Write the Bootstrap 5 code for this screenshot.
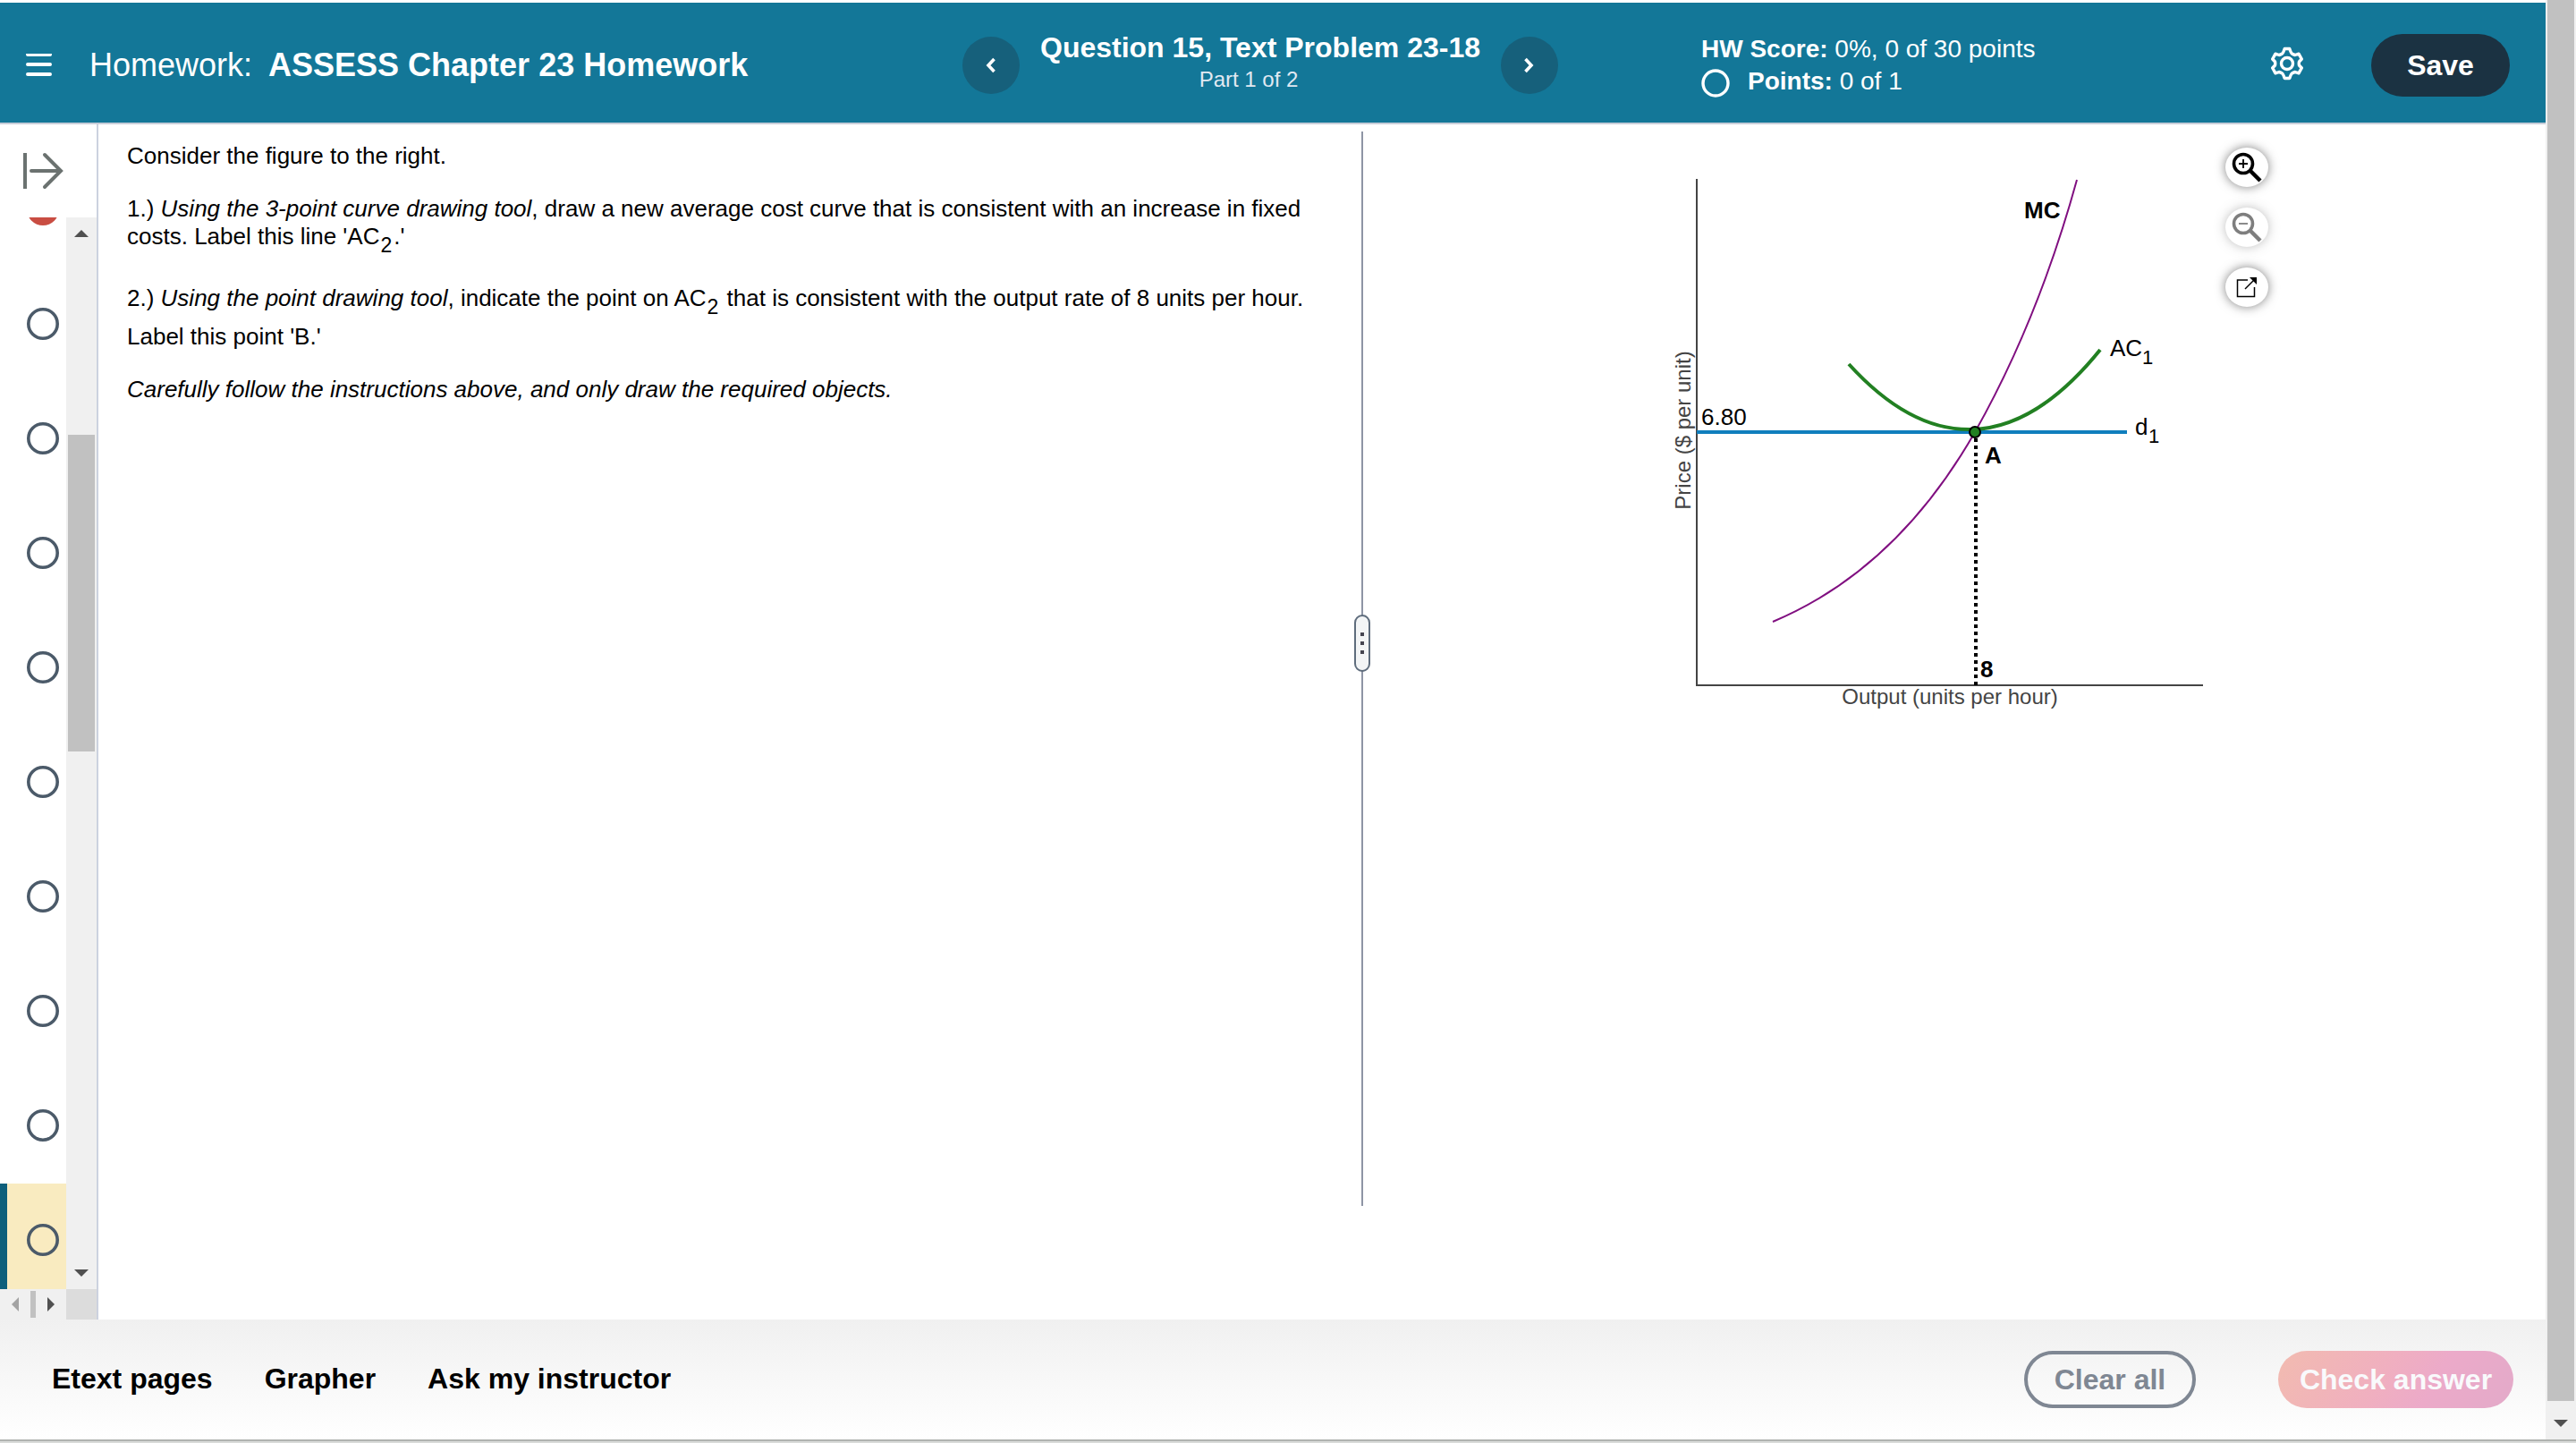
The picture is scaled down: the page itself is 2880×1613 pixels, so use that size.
<!DOCTYPE html>
<html lang="en">
<head>
<meta charset="utf-8">
<meta name="viewport" content="width=device-width, initial-scale=1">
<title>ASSESS Chapter 23 Homework</title>
<link href="https://cdn.jsdelivr.net/npm/bootstrap@5.3.0/dist/css/bootstrap.min.css" rel="stylesheet">
<style>
  body { font-family: "Liberation Sans", Arial, sans-serif; font-size: 26px; line-height: 31px; color: #000; background: #fff; }
  button { border: 0; padding: 0; background: none; color: inherit; }
  .page-shell { border-bottom: 2px solid #d9dbd9; }
  .page-frame { border-bottom: 2px solid #b0b3b0; }
  .app-bar { height: 136px; margin-top: 3px; padding-top: 6px; background: #137798; color: #fff; border-bottom: 2px solid #c7cdd8; }
  .bar-side { flex: 1 1 0; min-width: 0; }
  .bar-title { margin-left: 29px; gap: 42px; font-size: 36px; line-height: 40px; }
  .bar-title strong { margin-left: 18px; }
  .bar-center { padding-right: 28px; gap: 20px; }
  .round-nav { width: 64px; height: 64px; border-radius: 50%; background: #16607b; }
  .question-title { font-size: 32px; line-height: 36px; margin: 0; font-weight: 700; }
  .question-part { font-size: 24px; line-height: 36px; color: #e1e9f2; padding-right: 26px; }
  .question-block { padding-bottom: 4px; width: 498px; }
  .score-block { margin-left: 132px; font-size: 28px; line-height: 36px; }
  .score-ring { margin-right: 20px; }
  .save-btn { width: 155px; height: 70px; border-radius: 35px; background: #1b3242; font-size: 32px; font-weight: 700; margin-left: 75px; margin-right: 40px; }

  .side-rail { width: 110px; border-right: 2px solid #ccd2df; }
  .rail-toggle { height: 104px; padding-left: 25px; }
  .question-list { margin-top: -72px; }
  .question-link { height: 128px; padding-left: 30px; padding-bottom: 2px; }
  .question-link.current { border-left: 8px solid #0e5f7b; padding-left: 22px; background: #f9ebc0; }
  .scroll-track { width: 34px; background: #f0f0f0; }
  .rail-track, .page-track { padding-bottom: 14px; }
  .rail-track { padding-top: 14px; }
  .scroll-thumb { width: 30px; background: #c1c1c1; }
  .rail-thumb { margin-top: 221px; height: 354px; }
  .rail-bottom { height: 34px; background: #f0f0f0; }
  .rail-corner { width: 34px; background: #dcdcdc; }
  .tiny-thumb { width: 6px; height: 30px; background: #c1c1c1; }

  .prompt-pane { flex: 1412 1 0; min-width: 0; }
  .prompt-text { padding: 20px 20px 0 32px; }
  .prompt-text p { margin-bottom: 28px; }
  .prompt-text sub { font-size: 23px; line-height: 0; bottom: -9px; margin: 0 2px 0 1px; }
  .prompt-text .first-step { margin-bottom: 32px; }
  .prompt-text .second-step { line-height: 43px; margin-bottom: 22px; }
  .splitter { width: 2px; margin: 8px 0 127px; background: #8e95a5; }
  .split-handle { top: 45%; width: 18px; height: 64px; border: 2px solid #5f6d7d; border-radius: 9px; background: #f3f5f6; gap: 6px; }
  .split-handle i { width: 4px; height: 4px; background: #454550; }
  .figure-pane { flex: 1322 1 0; min-width: 0; padding-top: 26px; gap: 14px; }
  .figure-pane text { font-family: "Liberation Sans", Arial, sans-serif; font-size: 26px; }
  .figure-pane .axis-name { font-size: 24px; fill: #444; }
  .figure-pane .index-digit { font-size: 22px; }
  .tool-stack { gap: 23px; }
  .tool-btn { width: 48px; height: 44px; border-radius: 50%; background: #fff; box-shadow: 0 0 12px rgba(0,0,0,.5); }
  .tool-btn:disabled { opacity: .5; }

  .foot-bar { height: 134px; padding: 0 36px 0 58px; background: linear-gradient(#f0f0f0, #fff); font-size: 32px; line-height: 36px; font-weight: 700; }
  .foot-links { gap: 58px; padding-bottom: 2px; }
  .foot-links a { color: #000; text-decoration: none; }
  .pill { height: 64px; border-radius: 32px; }
  .clear-btn { width: 192px; border: 4px solid #7f8793; color: #7f8793; }
  .check-btn { width: 263px; margin-left: 92px; color: #f9fafc; background: linear-gradient(120deg, #f2bbb0 0%, #f0afc0 45%, #ecaac9 65%, #e3aac9 100%); }
  .page-thumb { height: 1566px; max-height: 99%; }
</style>
<script src="https://cdn.jsdelivr.net/npm/bootstrap@5.3.0/dist/js/bootstrap.bundle.min.js"></script>
</head>
<body>
<div class="page-shell vh-100 overflow-hidden d-flex flex-column">
<div class="page-frame d-flex flex-fill overflow-hidden">
  <div class="d-flex flex-column flex-fill overflow-hidden">

    <header class="app-bar d-flex align-items-center flex-shrink-0">
      <div class="bar-side">
        <div class="bar-title d-flex align-items-center">
          <button type="button" aria-label="Menu" class="d-flex">
            <svg width="29" height="26" viewBox="0 0 29 26" stroke="#fff" stroke-width="4" stroke-linecap="round"><path d="M2 1H27M2 12H27M2 23H27"/></svg>
          </button>
          <div class="text-nowrap">Homework:<strong>ASSESS Chapter 23 Homework</strong></div>
        </div>
      </div>
      <div class="bar-center d-flex align-items-center">
        <button type="button" class="round-nav d-flex align-items-center justify-content-center" aria-label="Previous question">
          <svg width="12" height="18" viewBox="0 0 12 18" fill="none" stroke="#fff" stroke-width="3.600"><path d="M9.500 2L3 9L9.500 16"/></svg>
        </button>
        <div class="question-block text-center text-nowrap">
          <h1 class="question-title">Question 15, Text Problem 23-18</h1>
          <div class="question-part">Part 1 of 2</div>
        </div>
        <button type="button" class="round-nav d-flex align-items-center justify-content-center" aria-label="Next question">
          <svg width="12" height="18" viewBox="0 0 12 18" fill="none" stroke="#fff" stroke-width="3.600"><path d="M1.500 2L8 9L1.500 16"/></svg>
        </button>
      </div>
      <div class="bar-side d-flex align-items-center">
        <div class="score-block text-nowrap">
          <div><strong>HW Score:</strong> 0%, 0 of 30 points</div>
          <div class="d-flex align-items-center">
            <svg class="score-ring" width="32" height="36" viewBox="0 0 32 36"><circle cx="16" cy="20" r="14" fill="none" stroke="#fff" stroke-width="3.400"/></svg>
            <span><strong>Points:</strong> 0 of 1</span>
          </div>
        </div>
        <button type="button" class="ms-auto d-flex pb-1" aria-label="Settings">
          <svg width="38" height="38" viewBox="0 0 38 38" fill="none" stroke="#fff" stroke-width="3.400" stroke-linejoin="round">
            <path d="M16.200 2.500H21.800Q23.500 7.500 24.500 8Q26 9 28 9.500L32 8.200L35.300 14L32.500 17Q32 19 32.500 21L35.300 24L32 29.800L28 28.500Q26 29 24.500 30Q23.500 30.500 21.800 35.500H16.200Q14.500 30.500 13.500 30Q12 29 10 28.500L6 29.800L2.700 24L5.500 21Q6 19 5.500 17L2.700 14L6 8.200L10 9.500Q12 9 13.500 8Q14.500 7.500 16.200 2.500Z"/>
            <circle cx="19" cy="19" r="6.500"/>
          </svg>
        </button>
        <button type="button" class="save-btn">Save</button>
      </div>
    </header>

    <main class="d-flex flex-fill overflow-hidden">
      <nav class="side-rail d-flex flex-column flex-shrink-0" aria-label="Questions">
        <button type="button" class="rail-toggle d-flex align-items-center flex-shrink-0" aria-label="Expand question list">
          <svg width="46" height="42" viewBox="0 0 46 42" fill="none" stroke="#6b7270" stroke-width="4"><path d="M3 1V41"/><path d="M10 21H42" stroke-linecap="round"/><path d="M25 3L43 21L25 39" stroke-linecap="round"/></svg>
        </button>
        <div class="d-flex flex-fill overflow-hidden">
          <div class="flex-fill overflow-hidden">
            <div class="question-list d-flex flex-column" id="questionList"></div>
          </div>
          <div class="scroll-track rail-track d-flex flex-column align-items-center">
            <svg width="16" height="8" viewBox="0 0 16 8" fill="#505050"><path d="M0 8L8 0L16 8Z"/></svg>
            <div class="scroll-thumb rail-thumb"></div>
            <svg class="mt-auto" width="16" height="8" viewBox="0 0 16 8" fill="#505050"><path d="M0 0H16L8 8Z"/></svg>
          </div>
        </div>
        <div class="rail-bottom d-flex flex-shrink-0">
          <div class="d-flex flex-fill align-items-center justify-content-evenly">
            <svg width="8" height="16" viewBox="0 0 8 16" fill="#a3a3a3"><path d="M8 0V16L0 8Z"/></svg>
            <div class="tiny-thumb"></div>
            <svg width="8" height="16" viewBox="0 0 8 16" fill="#505050"><path d="M0 0V16L8 8Z"/></svg>
          </div>
          <div class="rail-corner"></div>
        </div>
      </nav>

      <section class="prompt-pane">
        <div class="prompt-text">
          <p>Consider the figure to the right.</p>
          <p class="first-step">1.) <em>Using the 3-point curve drawing tool</em>, draw a new average cost curve that is consistent with an increase in fixed costs. Label this line 'AC<sub>2</sub>.'</p>
          <p class="second-step">2.) <em>Using the point drawing tool</em>, indicate the point on AC<sub>2</sub> that is consistent with the output rate of 8 units per hour. Label this point 'B.'</p>
          <p><em>Carefully follow the instructions above, and only draw the required objects.</em></p>
        </div>
      </section>

      <div class="splitter position-relative">
        <button type="button" class="split-handle position-absolute start-50 translate-middle-x d-flex flex-column align-items-center justify-content-center" aria-label="Resize panes"><i></i><i></i><i></i></button>
      </div>

      <section class="figure-pane d-flex justify-content-center align-items-start">
        <svg width="640" height="640" viewBox="1834 165 640 640" role="img" aria-label="Marginal cost, average cost and demand curves">
          <path d="M1897 200V766H2463" fill="none" stroke="#444" stroke-width="2"/>
          <path d="M1897 483H2378" stroke="#107ebd" stroke-width="4"/>
          <path d="M1982 695Q2120 637 2208 483Q2279 357 2322 201" fill="none" stroke="#800f80" stroke-width="2"/>
          <path d="M2067 407C2155 504 2252 510 2348 391" fill="none" stroke="#228022" stroke-width="4"/>
          <path d="M2209 490V766" stroke="#000" stroke-width="4" stroke-dasharray="4 4"/>
          <circle cx="2208" cy="483" r="6" fill="#228022" stroke="#000" stroke-width="2"/>
          <text x="2263" y="244" font-weight="700">MC</text>
          <text x="2359" y="398">AC</text><text class="index-digit" x="2395" y="407">1</text>
          <text x="2387" y="486">d</text><text class="index-digit" x="2402" y="495">1</text>
          <text x="1902" y="475">6.80</text>
          <text x="2219" y="518" font-weight="700">A</text>
          <text x="2214" y="757" font-weight="700">8</text>
          <text class="axis-name" x="2180" y="787" text-anchor="middle">Output (units per hour)</text>
          <text class="axis-name" transform="translate(1890 481) rotate(-90)" text-anchor="middle">Price ($ per unit)</text>
        </svg>
        <div class="tool-stack d-flex flex-column">
          <button type="button" class="tool-btn d-flex align-items-center justify-content-center" aria-label="Zoom in">
            <svg width="34" height="34" viewBox="0 0 34 34" fill="none" stroke="#000"><circle cx="13" cy="13" r="10.500" stroke-width="3.600"/><path d="M21 21L32 32" stroke-width="4.500"/><path d="M8 13H18M13 8V18" stroke-width="1.800"/></svg>
          </button>
          <button type="button" class="tool-btn d-flex align-items-center justify-content-center" aria-label="Zoom out" disabled>
            <svg width="34" height="34" viewBox="0 0 34 34" fill="none" stroke="#000"><circle cx="13" cy="13" r="10.500" stroke-width="3.600"/><path d="M21 21L32 32" stroke-width="4.500"/><path d="M8 13H18" stroke-width="1.800"/></svg>
          </button>
          <button type="button" class="tool-btn d-flex align-items-center justify-content-center" aria-label="Open figure in new window">
            <svg width="24" height="24" viewBox="0 0 24 24" fill="none" stroke="#000" stroke-width="1.500"><path d="M13 4H1.500V22.500H20.500V12"/><path d="M10 14L20 4"/><path d="M15 1H23V9Z" fill="#000" stroke="none"/></svg>
          </button>
        </div>
      </section>
    </main>

    <footer class="foot-bar d-flex align-items-center flex-shrink-0">
      <div class="foot-links d-flex">
        <a href="#">Etext pages</a>
        <a href="#">Grapher</a>
        <a href="#">Ask my instructor</a>
      </div>
      <button type="button" class="pill clear-btn fw-bold ms-auto">Clear all</button>
      <button type="button" class="pill check-btn fw-bold">Check answer</button>
    </footer>
  </div>

  <div class="scroll-track page-track d-flex flex-column align-items-center justify-content-between flex-shrink-0">
    <div class="scroll-thumb page-thumb"></div>
    <svg width="16" height="8" viewBox="0 0 16 8" fill="#505050"><path d="M0 0H16L8 8Z"/></svg>
  </div>
</div>
</div>
<script>
  // One entry per question visible in the rail; the last one is the open question.
  const states = ["wrong", "open", "open", "open", "open", "open", "open", "open", "open", "current"];
  document.getElementById("questionList").innerHTML = states.map((state, i) => {
    const ring = state === "wrong"
      ? '<circle cx="18" cy="18" r="18" fill="#c94d42"/>'
      : '<circle cx="18" cy="18" r="16.200" fill="none" stroke="#4b5a69" stroke-width="3.600"/>';
    return `<a href="#" class="question-link d-flex align-items-center ${state === "current" ? "current" : ""}" aria-label="Question ${i + 6}"><svg width="36" height="36" viewBox="0 0 36 36">${ring}</svg></a>`;
  }).join("");
</script>
</body>
</html>
